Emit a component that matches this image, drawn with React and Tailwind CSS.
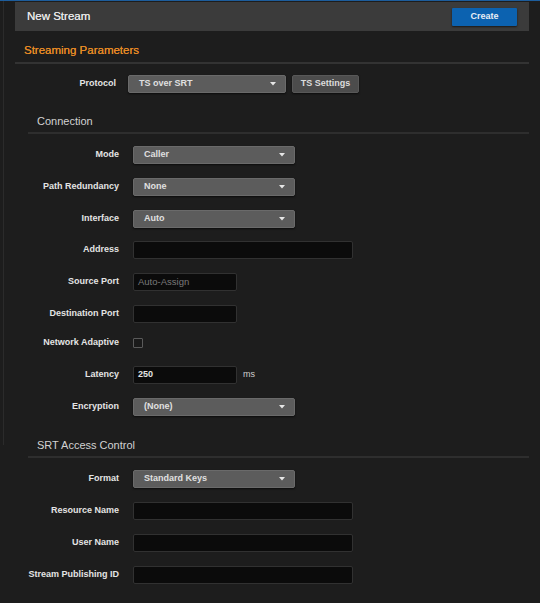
import React from 'react';

const font = { fontFamily: '"Liberation Sans", Arial, sans-serif' };

const Caret = () => (
  <svg width="6" height="4" viewBox="0 0 6 4" className="shrink-0">
    <path d="M0 0 L6 0 L3 3.5 Z" fill="#e6e6e6" />
  </svg>
);

const Select = ({ value, width = 'w-[162px]' }) => (
  <div
    className={`${width} h-[18px] flex items-center justify-between pl-[10px] pr-[9px] bg-[#5c5c5c] border border-[#6a6a6a] rounded-[2px] shadow-[0_1px_2px_rgba(0,0,0,0.6)] text-[9px] font-bold text-[#e0e0e0]`}
  >
    <span>{value}</span>
    <Caret />
  </div>
);

const Input = ({ value, placeholder, width = 'w-[220px]' }) => (
  <div
    className={`${width} h-[18px] flex items-center px-[4px] bg-[#0b0b0b] border border-[#313131] rounded-[2px] text-[9px] font-bold`}
  >
    {value ? (
      <span className="text-[#e4e4e4]">{value}</span>
    ) : (
      <span className="text-[#7a7a7a] font-normal text-[9.5px]">{placeholder}</span>
    )}
  </div>
);

const Row = ({ label, children, className = '' }) => (
  <div className={`flex items-center ${className}`}>
    <div className="w-[91px] text-right text-[9px] font-bold text-[#e4e4e4]">{label}</div>
    <div className="ml-[14px] flex items-center">{children}</div>
  </div>
);

export default function App() {
  return (
    <div className="w-[540px] h-[603px] bg-[#1d1d1d] overflow-hidden" style={font}>
      <div className="h-[1px] bg-[#1d5d9c]" />
      <div className="flex">
        <div className="w-[3px]" />
        <div className="w-[1px] h-[444px] bg-[#2b2b2b]" />
        <div className="ml-[11px] w-[514px]">
          {/* header */}
          <div className="mt-[1px] h-[29px] bg-[#3b3b3b] flex items-center justify-between pl-[12px] pr-[12px]">
            <span className="text-[11.5px] text-[#e6e6e6] [text-shadow:0_0_0.4px_#e6e6e6]">New Stream</span>
            <button className="w-[65px] h-[18px] bg-[#0c62b0] rounded-[1px] shadow-[0_1px_2px_rgba(0,0,0,0.6)] text-[9px] font-bold text-[#e8eef6]">
              Create
            </button>
          </div>

          {/* Streaming Parameters */}
          <div className="pt-[12px] pl-[9px] text-[11.5px] text-[#e98a25] leading-[14px] [text-shadow:0_0_0.4px_#e98a25]">
            Streaming Parameters
          </div>
          <div className="mt-[5px] h-[2px] bg-[#333333]" />

          <div className="mt-[11px] flex items-center">
            <div className="w-[101px] text-right text-[9px] font-bold text-[#e4e4e4]">Protocol</div>
            <div className="ml-[12px] flex items-center gap-[6px]">
              <Select value="TS over SRT" width="w-[158px]" />
              <button className="w-[67px] h-[18px] bg-[#4c4c4c] border border-[#585858] rounded-[2px] shadow-[0_1px_2px_rgba(0,0,0,0.6)] text-[9px] font-bold text-[#dcdcdc]">
                TS Settings
              </button>
            </div>
          </div>

          {/* Connection */}
          <div className="ml-[13px]">
            <div className="mt-[21px] pl-[9px] text-[11px] text-[#d2d2d2] leading-[14px]">Connection</div>
            <div className="mt-[4px] h-[2px] bg-[#2e2e2e]" />

            <Row label="Mode" className="mt-[12px]"><Select value="Caller" /></Row>
            <Row label="Path Redundancy" className="mt-[14px]"><Select value="None" /></Row>
            <Row label="Interface" className="mt-[14px]"><Select value="Auto" /></Row>
            <Row label="Address" className="mt-[13px]"><Input /></Row>
            <Row label="Source Port" className="mt-[14px]"><Input width="w-[104px]" placeholder="Auto-Assign" /></Row>
            <Row label="Destination Port" className="mt-[14px]"><Input width="w-[104px]" /></Row>
            <Row label="Network Adaptive" className="mt-[15px] h-[10px]">
              <div className="w-[10px] h-[10px] border border-[#5a5a5a] rounded-[1px] bg-[#1a1a1a]" />
            </Row>
            <Row label="Latency" className="mt-[18px]">
              <Input width="w-[104px]" value="250" />
              <span className="ml-[6px] text-[9px] text-[#cfcfcf]">ms</span>
            </Row>
            <Row label="Encryption" className="mt-[14px]"><Select value="(None)" /></Row>

            {/* SRT Access Control */}
            <div className="mt-[22px] pl-[9px] text-[11px] text-[#d2d2d2] leading-[14px]">SRT Access Control</div>
            <div className="mt-[4px] h-[2px] bg-[#2e2e2e]" />

            <Row label="Format" className="mt-[12px]"><Select value="Standard Keys" /></Row>
            <Row label="Resource Name" className="mt-[14px]"><Input /></Row>
            <Row label="User Name" className="mt-[14px]"><Input /></Row>
            <Row label="Stream Publishing ID" className="mt-[14px]"><Input /></Row>
          </div>
        </div>
      </div>
    </div>
  );
}
